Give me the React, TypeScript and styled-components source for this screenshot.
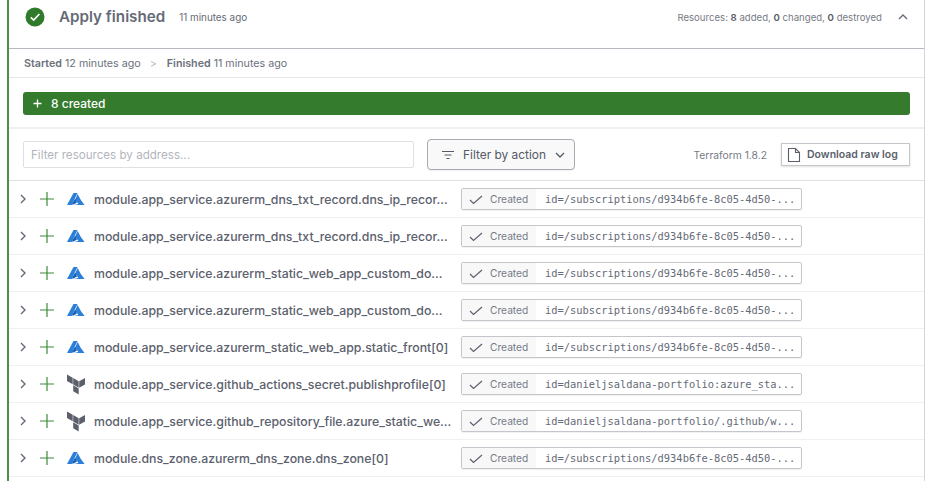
import React from "react";
import styled, { createGlobalStyle } from "styled-components";

const Global = createGlobalStyle`
  html, body { margin: 0; padding: 0; background: #fff; overflow: hidden; }
  body { font-family: Inter, "Liberation Sans", sans-serif; }
`;

const Card = styled.div`
  height: 481px;
  margin-left: 7px;
  border-left: 2px solid #4a8f46;
  border-right: 1px solid #d4d6da;
  overflow: hidden;
  box-sizing: content-box;
  width: 915px;
  color: #656a76;
`;

const Header = styled.header`
  border-bottom: 1px solid #b8bac2;
  display: flex;
  align-items: flex-start;
  padding: 7px 14px 0 16px;
  box-sizing: content-box;
  height: 41px;
`;

const StatusIcon = styled.svg`
  width: 20px;
  height: 20px;
  margin-right: 14px;
  flex: none;
`;

const Title = styled.h1`
  margin: 0 14px 0 0;
  font-size: 15.2px;
  line-height: 20px;
  font-weight: 600;
  color: #656a76;
`;

const Ago = styled.span`
  font-size: 9.9px;
  line-height: 20px;
  color: #656a76;
`;

const Summary = styled.div`
  margin-left: auto;
  display: flex;
  align-items: center;
  height: 20px;
  font-size: 9.6px;
  color: #777b86;
  b { font-weight: 600; color: #555a66; }
`;

const Collapse = styled.svg`
  width: 12px;
  height: 12px;
  margin-left: 15px;
  margin-right: 1px;
`;

const Timeline = styled.div`
  height: 28px;
  display: flex;
  align-items: center;
  padding-left: 15px;
  font-size: 10.7px;
  color: #6b707c;
  border-bottom: 1px solid #e6e7ea;
  b { font-weight: 600; }
`;

const Sep = styled.span`
  margin: 0 10px 0 9px;
  color: #b8bac2;
`;

const BarSection = styled.div`
  height: 51px;
  padding: 14px 14px 0;
  box-sizing: border-box;
  border-bottom: 2px solid #f0f0f2;
`;

const GreenBar = styled.div`
  height: 23px;
  background: #347b2e;
  border-radius: 3px;
  color: #fff;
  display: flex;
  align-items: center;
  padding-left: 9px;
  font-size: 12px;
  font-weight: 500;
  gap: 8px;
`;

const Controls = styled.div`
  height: 51px;
  display: flex;
  align-items: center;
  padding: 0 14px;
  box-sizing: border-box;
`;

const SearchBox = styled.input`
  width: 391px;
  height: 27px;
  box-sizing: border-box;
  border: 1px solid #dfe0e4;
  border-radius: 2px;
  padding: 0 7px;
  font: 11.6px Inter, "Liberation Sans", sans-serif;
  outline: none;
  margin-right: 13px;
  &::placeholder { color: #b3b5bd; opacity: 1; }
`;

const FilterButton = styled.button`
  width: 148px;
  height: 31px;
  box-sizing: border-box;
  border: 1px solid #a9abb3;
  border-radius: 4px;
  background: #f9f9fa;
  color: #555a66;
  display: flex;
  align-items: center;
  padding: 0 0 0 13px;
  gap: 8px;
  font: 11.9px Inter, "Liberation Sans", sans-serif;
  box-shadow: 0 1px 1px rgba(0, 0, 0, 0.06);
`;

const Version = styled.span`
  margin-left: auto;
  margin-right: 14px;
  font-size: 10.3px;
  color: #777b86;
`;

const DownloadButton = styled.button`
  width: 129px;
  height: 23px;
  box-sizing: border-box;
  border: 1px solid #c4c6cc;
  background: #fff;
  color: #5a5f6b;
  display: flex;
  align-items: center;
  padding: 0 0 0 5px;
  gap: 6px;
  font: 600 10.5px Inter, "Liberation Sans", sans-serif;
  box-shadow: 0 1px 2px rgba(0, 0, 0, 0.12);
`;

const List = styled.div`
  border-top: 1px solid #dfe0e4;
`;

const Row = styled.div`
  height: 37px;
  box-sizing: border-box;
  display: flex;
  align-items: center;
  border-bottom: 1px solid #f0f0f2;
  padding-left: 9px;
`;

const Address = styled.span`
  width: 367px;
  margin-left: 10px;
  flex: none;
  font-size: 12.3px;
  font-weight: 500;
  color: #5c616d;
  white-space: nowrap;
`;

const Result = styled.div`
  width: 341px;
  height: 22px;
  box-sizing: border-box;
  border: 1px solid #c4c6cc;
  border-radius: 2px;
  display: flex;
  align-items: stretch;
  box-shadow: 0 1px 1px rgba(0, 0, 0, 0.06);
`;

const Status = styled.span`
  width: 74px;
  flex: none;
  background: #f8f8f9;
  display: flex;
  align-items: center;
  padding-left: 7px;
  gap: 7px;
  box-sizing: border-box;
  font-size: 10.2px;
  color: #777b86;
`;

const Id = styled.code`
  padding-left: 9px;
  font: 10.4px/20px "DejaVu Sans Mono", "Liberation Mono", monospace;
  color: #656a76;
  white-space: nowrap;
`;

const Chevron = () => (
  <svg width="10" height="12" viewBox="0 0 10 12" fill="none" stroke="#656a76" strokeWidth="1.4" style={{ flex: "none" }}>
    <path d="M3 2l4 4-4 4" />
  </svg>
);

const Plus = () => (
  <svg width="16" height="16" viewBox="0 0 16 16" fill="none" stroke="#3f8a3a" strokeWidth="1.2" style={{ flex: "none", marginLeft: 11, marginRight: 12 }}>
    <path d="M8 1v14M1 8h14" />
  </svg>
);

const Azure = () => (
  <svg width="18" height="16" viewBox="0 0 18 16" style={{ flex: "none", marginRight: -1 }}>
    <path d="M6.5 2h4L4.7 14H0z" fill="#2b7fd9" />
    <path d="M10.6 3l3.4 6.2 3.6 4.8H7l4.4-.9-3.2-4.7z" fill="#2b7fd9" />
    <path d="M8.2 7.6l1.8 4-3.6 2H4.7z" fill="#1460b4" />
  </svg>
);

const Terraform = () => (
  <svg width="18" height="21" viewBox="0 0 18 21" fill="#5c606c" style={{ flex: "none", marginRight: -1 }}>
    <path d="M0 .5l5.7 3.2v6.6L0 7z" />
    <path d="M6.2 4l5.5 3.2v6.6L6.2 10.6z" />
    <path d="M12.2 7.2L18 4v6.6l-5.8 3.2z" />
    <path d="M6.2 11.2l5.5 3.2v6.1l-5.5-3.2z" />
  </svg>
);

const Check = () => (
  <svg width="14" height="11" viewBox="0 0 14 11" fill="none" stroke="#5c616d" strokeWidth="1.2" style={{ flex: "none" }}>
    <path d="M1 6l3.5 3.5L13 2" />
  </svg>
);

const rows = [
  ["module.app_service.azurerm_dns_txt_record.dns_ip_recor...", "id=/subscriptions/d934b6fe-8c05-4d50-...", "a"],
  ["module.app_service.azurerm_dns_txt_record.dns_ip_recor...", "id=/subscriptions/d934b6fe-8c05-4d50-...", "a"],
  ["module.app_service.azurerm_static_web_app_custom_do...", "id=/subscriptions/d934b6fe-8c05-4d50-...", "a"],
  ["module.app_service.azurerm_static_web_app_custom_do...", "id=/subscriptions/d934b6fe-8c05-4d50-...", "a"],
  ["module.app_service.azurerm_static_web_app.static_front[0]", "id=/subscriptions/d934b6fe-8c05-4d50-...", "a"],
  ["module.app_service.github_actions_secret.publishprofile[0]", "id=danieljsaldana-portfolio:azure_sta...", "t"],
  ["module.app_service.github_repository_file.azure_static_we...", "id=danieljsaldana-portfolio/.github/w...", "t"],
  ["module.dns_zone.azurerm_dns_zone.dns_zone[0]", "id=/subscriptions/d934b6fe-8c05-4d50-...", "a"],
];

export default function App() {
  return (
    <>
      <Global />
      <Card>
        <Header>
          <StatusIcon viewBox="0 0 20 20">
            <circle cx="10" cy="10" r="9.5" fill="#2f7a2b" />
            <path d="M5.8 10.3l2.9 2.8L14.4 7" fill="none" stroke="#fff" strokeWidth="1.7" />
          </StatusIcon>
          <Title>Apply finished</Title>
          <Ago>11 minutes ago</Ago>
          <Summary>
            <span>
              Resources: <b>8</b> added, <b>0</b> changed, <b>0</b> destroyed
            </span>
            <Collapse viewBox="0 0 12 12" fill="none" stroke="#656a76" strokeWidth="1.3">
              <path d="M2 8l4-4 4 4" />
            </Collapse>
          </Summary>
        </Header>
        <Timeline>
          <span>
            <b>Started</b> 12 minutes ago
          </span>
          <Sep>&gt;</Sep>
          <span>
            <b>Finished</b> 11 minutes ago
          </span>
        </Timeline>
        <BarSection>
          <GreenBar>
            <svg width="11" height="11" viewBox="0 0 11 11" fill="none" stroke="#fff" strokeWidth="1.3">
              <path d="M5.5 1.5v8M1.5 5.5h8" />
            </svg>
            8 created
          </GreenBar>
        </BarSection>
        <Controls>
          <SearchBox placeholder="Filter resources by address..." />
          <FilterButton>
            <svg width="14" height="12" viewBox="0 0 14 12" fill="none" stroke="#555a66" strokeWidth="1.2">
              <path d="M1 2.5h12M3.5 6h7M5.5 9.5h3" />
            </svg>
            Filter by action
            <svg width="12" height="12" viewBox="0 0 12 12" fill="none" stroke="#555a66" strokeWidth="1.3">
              <path d="M2 4l4 4 4-4" />
            </svg>
          </FilterButton>
          <Version>Terraform 1.8.2</Version>
          <DownloadButton>
            <svg width="14" height="16" viewBox="0 0 14 16" fill="none" stroke="#5a5f6b" strokeWidth="1.1">
              <path d="M1.5 1.5h7l4 4v9h-11zM8.5 1.5v4h4" />
            </svg>
            Download raw log
          </DownloadButton>
        </Controls>
        <List>
          {rows.map(([name, id, kind], i) => (
            <Row key={i}>
              <Chevron />
              <Plus />
              {kind === "a" ? <Azure /> : <Terraform />}
              <Address>{name}</Address>
              <Result>
                <Status>
                  <Check />
                  Created
                </Status>
                <Id>{id}</Id>
              </Result>
            </Row>
          ))}
        </List>
      </Card>
    </>
  );
}
